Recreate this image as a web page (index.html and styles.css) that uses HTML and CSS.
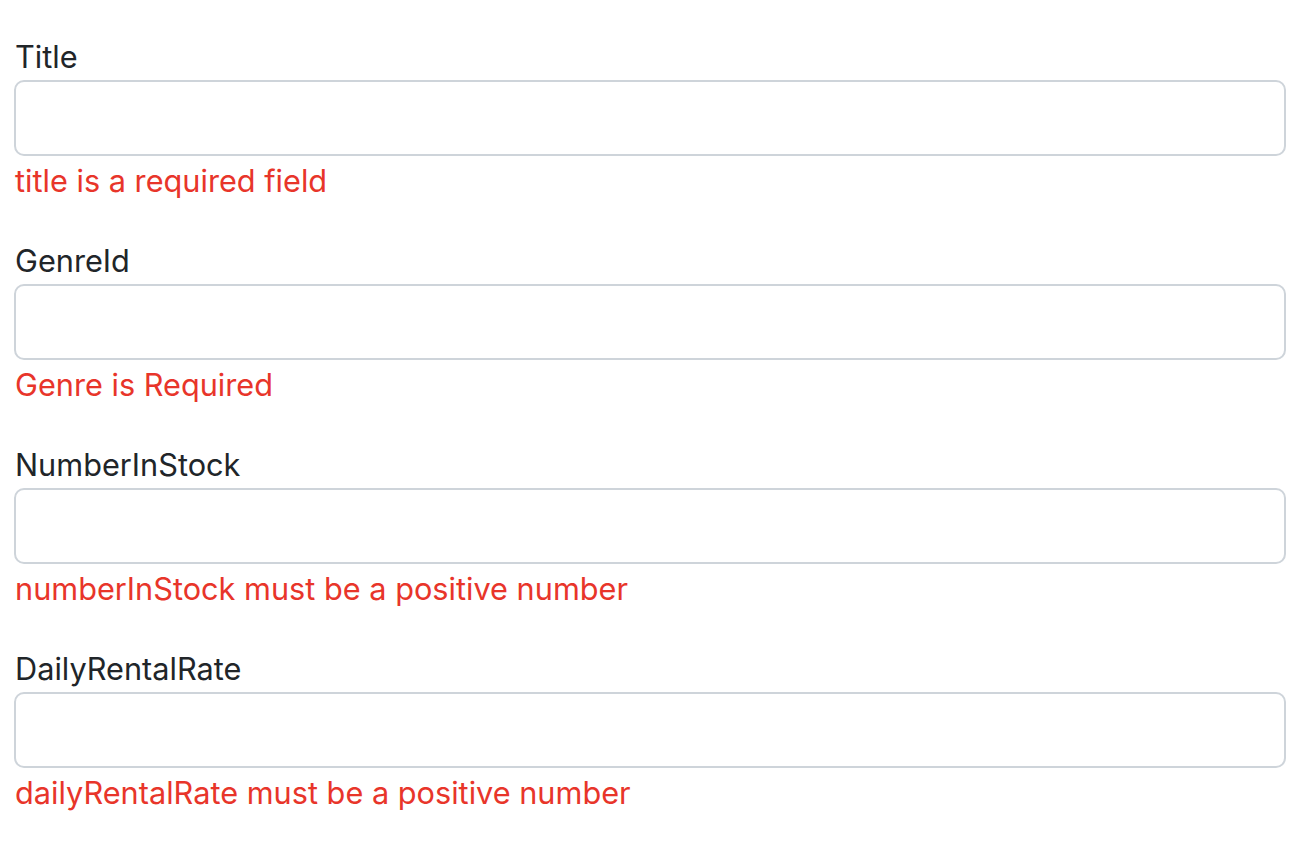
FILE: index.html
```html
<!DOCTYPE html>
<html>
<head>
<meta charset="utf-8">
<link rel="stylesheet" href="styles.css">
</head>
<body>
<form class="form">
  <div class="group">
    <label class="label" for="title">Title</label>
    <input class="input" id="title" type="text">
    <div class="error">title is a required field</div>
  </div>
  <div class="group">
    <label class="label" for="genreId">GenreId</label>
    <input class="input" id="genreId" type="text">
    <div class="error">Genre is Required</div>
  </div>
  <div class="group">
    <label class="label" for="numberInStock">NumberInStock</label>
    <input class="input" id="numberInStock" type="text">
    <div class="error">numberInStock must be a positive number</div>
  </div>
  <div class="group">
    <label class="label" for="dailyRentalRate">DailyRentalRate</label>
    <input class="input" id="dailyRentalRate" type="text">
    <div class="error">dailyRentalRate must be a positive number</div>
  </div>
</form>
</body>
</html>
```
FILE: styles.css
```css
html, body {
  margin: 0;
  padding: 0;
  background: #ffffff;
}
body {
  font-family: Inter, "Liberation Sans", sans-serif;
  font-size: 30.7px;
  color: #212529;
}
.form {
  display: flex;
  flex-direction: column;
  gap: 32px;
  padding: 33px 22px 0 14px;
}
.group {
  display: flex;
  flex-direction: column;
}
.label {
  display: block;
  height: 47px;
  line-height: 48px;
  padding-left: 1px;
}
.input {
  display: block;
  box-sizing: border-box;
  width: 100%;
  height: 76px;
  margin: 0;
  border: 2px solid #ced4da;
  border-radius: 10px;
  background: #fff;
  font: inherit;
  padding: 0 24px;
  outline: none;
}
.error {
  height: 49px;
  line-height: 50px;
  color: #e8352a;
  padding-left: 1px;
}
```
